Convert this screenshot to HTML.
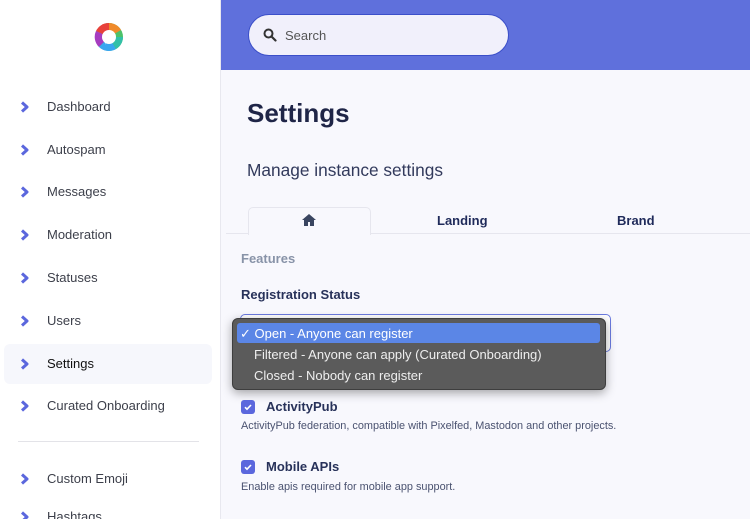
<!DOCTYPE html>
<html style="width:750px;height:519px;overflow:hidden"><head><meta charset="utf-8"><style>
*{box-sizing:border-box;margin:0;padding:0}
body{width:750px;height:519px;overflow:hidden;font-family:"Liberation Sans",sans-serif;background:#f8f8fd;position:relative}
.side{position:absolute;left:0;top:0;width:221px;height:519px;background:#fff;border-right:1px solid #e8e8ef}
.nav{position:absolute;left:0;width:221px;font-size:13px;color:#3c3f4a}
.nav .ch{position:absolute;left:20px;top:-6px}
.nav span{position:absolute;left:47px;top:-8px}
.active{position:absolute;left:4px;top:344px;width:208px;height:40px;background:#f6f7fc;border-radius:6px}
.hdr{position:absolute;left:221px;top:0;width:529px;height:70px;background:#5f70dc}
.search{position:absolute;left:248px;top:14px;width:261px;height:42px;border-radius:21px;background:#f1f0fb;border:1px solid #3b4fc9}
.search span{position:absolute;left:36px;top:13px;font-size:13px;color:#555}
.t{position:absolute;white-space:nowrap}
</style></head><body>
<div class="side">
<svg style="position:absolute;left:94px;top:22px" width="30" height="30" viewBox="0 0 30 30">
<circle cx="15" cy="15" r="14" fill="#4cc26a"/>
<path d="M15 15 L15 1 A14 14 0 0 0 2 9 Z" fill="#e8413b"/>
<path d="M15 15 L2 9 A14 14 0 0 0 5 25 Z" fill="#a63cc0"/>
<path d="M15 15 L5 25 A14 14 0 0 0 22 27 Z" fill="#3aa6f0"/>
<path d="M15 15 L22 27 A14 14 0 0 0 29 15 Z" fill="#32c0a8"/>
<path d="M15 15 L15 1 A14 14 0 0 1 27 8 Z" fill="#f08a2a"/>
<circle cx="15" cy="15" r="7" fill="#fff"/>
<path d="M11 23 V10 H16 A4 4 0 0 1 16 18 H12" fill="#fff"/>
</svg>
<div class="active"></div>
</div>
<div id="navs"></div>
<div class="t" style="left:18px;top:441px;width:181px;height:1px;background:#e3e3e8"></div>
<div class="hdr"></div>
<div class="search"><svg style="position:absolute;left:14px;top:13px" width="14" height="14" viewBox="0 0 14 14"><circle cx="5.5" cy="5.5" r="4" fill="none" stroke="#333" stroke-width="2"/><path d="M8.5 8.5L12.5 12.5" stroke="#333" stroke-width="2.2" stroke-linecap="round"/></svg><span>Search</span></div>
<div class="t" style="left:247px;top:98px;font-size:26px;font-weight:bold;color:#1f2547">Settings</div>
<div class="t" style="left:247px;top:160px;font-size:17.3px;color:#323a5c">Manage instance settings</div>
<div class="t" style="left:226px;top:233px;width:524px;height:1px;background:#e6e6ee"></div>
<div class="t" style="left:248px;top:207px;width:123px;height:28px;border:1px solid #e6e6ee;border-bottom:none;border-radius:5px 5px 0 0;background:#f8f8fd"></div>
<svg style="position:absolute;left:302px;top:214px" width="14" height="12" viewBox="0 0 14 12"><path d="M7 0L0 6h2v6h4V8h2v4h4V6h2z" fill="#3a4560"/></svg>
<div class="t" style="left:437px;top:213px;font-size:13px;font-weight:bold;color:#1f2a5a">Landing</div>
<div class="t" style="left:617px;top:213px;font-size:13px;font-weight:bold;color:#1f2a5a">Brand</div>
<div class="t" style="left:241px;top:251px;font-size:13px;font-weight:bold;color:#8893a8">Features</div>
<div class="t" style="left:241px;top:287px;font-size:13px;font-weight:bold;color:#28325a">Registration Status</div>
<div class="t" style="left:240px;top:314px;width:371px;height:38px;border:1px solid #6b7be0;border-radius:5px;background:#fff"></div>
<div class="t" style="left:232px;top:318px;width:374px;height:72px;background:#5b5b5b;border:1px solid #3e3e3e;border-radius:6px;box-shadow:0 3px 10px rgba(0,0,0,.35)"></div>
<div class="t" style="left:237px;top:323px;width:363px;height:20px;background:#5b86e6;border-radius:3px"></div>
<div class="t" style="left:240px;top:326px;font-size:13px;color:#fff">✓ Open - Anyone can register</div>
<div class="t" style="left:254px;top:347px;font-size:13px;color:#eee">Filtered - Anyone can apply (Curated Onboarding)</div>
<div class="t" style="left:254px;top:368px;font-size:13px;color:#eee">Closed - Nobody can register</div>
<div class="t" style="left:241px;top:400px;width:14px;height:14px;background:#5b67dd;border-radius:3px"><svg width="14" height="14" viewBox="0 0 14 14"><path d="M4 7.2L6 9.2L10 5" fill="none" stroke="#fff" stroke-width="1.6"/></svg></div>
<div class="t" style="left:266px;top:399px;font-size:13px;font-weight:bold;color:#28325a">ActivityPub</div>
<div class="t" style="left:241px;top:420px;font-size:10.9px;color:#4a5270">ActivityPub federation, compatible with Pixelfed, Mastodon and other projects.</div>
<div class="t" style="left:241px;top:460px;width:14px;height:14px;background:#5b67dd;border-radius:3px"><svg width="14" height="14" viewBox="0 0 14 14"><path d="M4 7.2L6 9.2L10 5" fill="none" stroke="#fff" stroke-width="1.6"/></svg></div>
<div class="t" style="left:266px;top:459px;font-size:13px;font-weight:bold;color:#28325a">Mobile APIs</div>
<div class="t" style="left:241px;top:481px;font-size:10.9px;color:#4a5270">Enable apis required for mobile app support.</div>
<script>
var items=[["Dashboard",107],["Autospam",150],["Messages",192],["Moderation",235],["Statuses",278],["Users",321],["Settings",364],["Curated Onboarding",406],["Custom Emoji",479],["Hashtags",517]];
var h="";items.forEach(function(i){h+='<div class="nav" style="top:'+i[1]+'px"><svg class="ch" width="10" height="12" viewBox="0 0 10 12"><path d="M2 1.5L7 6L2 10.5" fill="none" stroke="#5b67dd" stroke-width="3" stroke-linejoin="round"/></svg><span style="'+(i[0]=="Settings"?"color:#111":"")+'">'+i[0]+'</span></div>';});
document.getElementById("navs").innerHTML=h;
</script>
</body></html>
